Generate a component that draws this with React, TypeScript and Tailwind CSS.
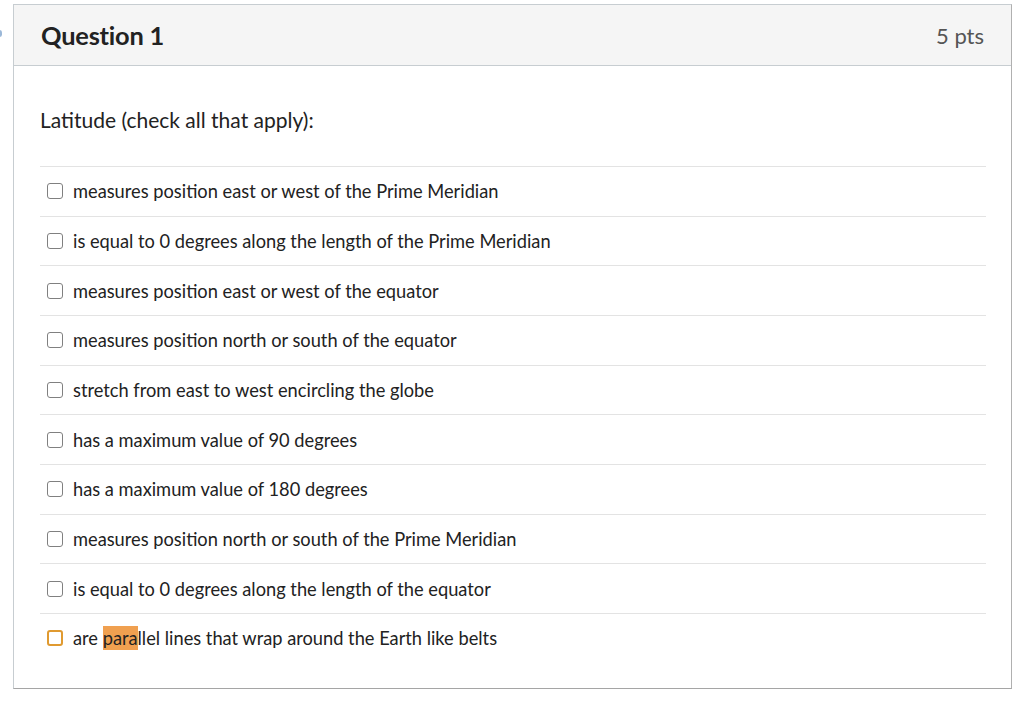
import React from "react";

const options: React.ReactNode[] = [
  "measures position east or west of the Prime Meridian",
  "is equal to 0 degrees along the length of the Prime Meridian",
  "measures position east or west of the equator",
  "measures position north or south of the equator",
  "stretch from east to west encircling the globe",
  "has a maximum value of 90 degrees",
  "has a maximum value of 180 degrees",
  "measures position north or south of the Prime Meridian",
  "is equal to 0 degrees along the length of the equator",
];

export default function App() {
  return (
    <div className="w-[1024px] h-[711px] bg-white relative overflow-hidden" style={{ fontFamily: "Lato, 'Noto Sans', sans-serif" }}>
      <div className="absolute left-[-3px] top-[30px] w-[5px] h-[7px] rounded-full bg-[#9bb8d8]" />
      <div className="ml-[13px] mt-[4px] w-[999px] h-[685px] border border-[#c7cdd1] border-b-[#a5a5a5] border-r-[#b0b0b0] flex flex-col">
        <div className="h-[61px] bg-[#f5f5f5] border-b border-[#c7cdd1] flex items-center justify-between pl-[27px] pr-[27px] shrink-0">
          <div className="text-[25.4px] font-bold text-[#222] tracking-[-0.2px] leading-[30px]">Question 1</div>
          <div className="text-[22px] text-[#555] leading-[30px] pt-[2px]">5 pts</div>
        </div>
        <div className="pl-[26px] pr-[25px] pt-[40px]">
          <div className="text-[21px] leading-[28px] text-[#222] mb-[32px]">Latitude (check all that apply):</div>
          <div>
            {options.map((o, i) => (
              <div key={i} className="h-[49.67px] border-t border-[#e3e3e3] flex items-center pl-[7px]">
                <span className="w-[16px] h-[16px] border border-[#808080] rounded-[3px] bg-white shrink-0" />
                <span className="ml-[10px] text-[18.25px] leading-[24px] text-[#222]">{o}</span>
              </div>
            ))}
            <div className="h-[49.67px] border-t border-[#e3e3e3] flex items-center pl-[7px]">
              <span className="w-[16px] h-[16px] border-[2.5px] border-[#e09a30] rounded-[3px] bg-white shrink-0" />
              <span className="ml-[10px] text-[18.25px] leading-[24px] text-[#222]">
                are <span className="bg-[#f0a050] text-[#222] inline-block">para</span>llel lines that wrap around the Earth like belts
              </span>
            </div>
          </div>
        </div>
      </div>
    </div>
  );
}
